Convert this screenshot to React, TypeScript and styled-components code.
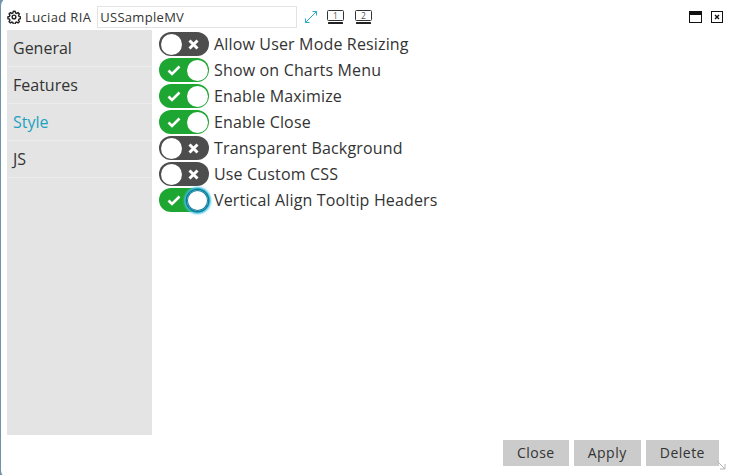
import React from 'react';
import styled, { createGlobalStyle } from 'styled-components';

const GlobalStyle = createGlobalStyle`
    html, body {
        margin: 0;
        padding: 0;
        width: 729px;
        height: 475px;
        overflow: hidden;
        background-color: #6f93a8;
    }
`;

const Dialog = styled.div`
    width: 736px;
    height: 482px;
    margin: -3px 0 0 1px;
    box-sizing: border-box;
    padding: 7px 0 0 6px;
    display: flex;
    flex-direction: column;
    position: relative;
    background-color: white;
    border-radius: 9px;
    font-family: "Open Sans", sans-serif;
    color: #333;
`;

const Content = styled.div`
    width: 722px;
    display: flex;
    flex-direction: column;
`;

const TitleBar = styled.div`
    height: 26px;
    display: flex;
    flex-direction: row;
    align-items: center;
    padding-right: 6px;
`;

const TitleLabel = styled.span`
    font-size: 13px;
    letter-spacing: 0.35px;
    margin: 0 6px 0 4px;
    color: #333;
`;

const NameInput = styled.div`
    width: 200px;
    height: 22px;
    box-sizing: border-box;
    border: 1px solid #e3e3e3;
    padding-left: 2px;
    font-size: 13px;
    letter-spacing: 0.3px;
    line-height: 20px;
    color: #333;
`;

const TitleIcon = styled.svg<{ $left?: number }>`
    flex-shrink: 0;
    margin-left: ${p => p.$left ?? 0}px;
    display: block;
`;

const Spacer = styled.div`
    flex-grow: 1;
`;

const Body = styled.div`
    height: 405px;
    display: flex;
    flex-direction: row;
`;

const Sidebar = styled.div`
    width: 145px;
    height: 100%;
    flex-shrink: 0;
    background-color: #e4e4e4;
`;

const Tab = styled.div<{ $active?: boolean }>`
    height: 37px;
    box-sizing: border-box;
    padding-left: 6px;
    line-height: 36px;
    font-size: 16px;
    border-bottom: 1px solid #ececec;
    color: ${p => (p.$active ? '#1ea1c1' : '#333')};
`;

const Options = styled.div`
    display: flex;
    flex-direction: column;
    padding: 1px 0 0 7px;
`;

const OptionRow = styled.div`
    height: 26px;
    display: flex;
    flex-direction: row;
    align-items: center;
    font-size: 16px;
    letter-spacing: 0.16px;
    color: #333;
`;

const Toggle = styled.div<{ $on: boolean }>`
    width: 50px;
    height: 24px;
    box-sizing: border-box;
    border-radius: 12px;
    margin-right: 5px;
    padding: 0 10px 0 8px;
    display: flex;
    align-items: center;
    justify-content: ${p => (p.$on ? 'flex-start' : 'flex-end')};
    position: relative;
    background-color: ${p => (p.$on ? '#1ea632' : '#4d4d4d')};
`;

const Knob = styled.div<{ $on: boolean; $focused?: boolean }>`
    position: absolute;
    top: 1.5px;
    ${p => (p.$on ? 'right: 1.5px;' : 'left: 1.5px;')}
    width: 21px;
    height: 21px;
    border-radius: 50%;
    background-color: white;
    ${p => p.$focused && 'box-shadow: inset 0 0 0 1px #0d7f9c, 0 0 0 1.5px #0d7f9c, 0 0 2px 3px #45c3e2;'}
`;

const Footer = styled.div`
    display: flex;
    flex-direction: row;
    justify-content: flex-end;
    gap: 5px;
    padding: 5px 10px 0 0;
`;

const FooterButton = styled.div`
    height: 26px;
    padding: 0 14px;
    background-color: #cbcbcb;
    color: #333;
    font-size: 14px;
    line-height: 26px;
    text-align: center;
    letter-spacing: 0.5px;
`;

const ResizeGrip = styled.svg`
    position: absolute;
    left: 715px;
    top: 463px;
`;

const GearIcon = () => (
    <TitleIcon width="14" height="14" viewBox="0 0 24 24" fill="none" stroke="#222" strokeWidth="2.4">
        <circle cx="12" cy="12" r="3.2" />
        <path d="M12 2.2l2 .2.7 2.7 1.9.8 2.4-1.4 2.2 2.3-1.4 2.4.8 1.8 2.6.8v3.2l-2.6.7-.8 1.9 1.4 2.4-2.2 2.2-2.4-1.4-1.9.8-.7 2.6h-3.2l-.7-2.6-1.9-.8-2.4 1.4-2.2-2.2 1.4-2.4-.8-1.9-2.6-.7v-3.2l2.6-.8.8-1.8-1.4-2.4 2.2-2.3 2.4 1.4 1.9-.8.7-2.7z" />
    </TitleIcon>
);

const ExpandIcon = () => (
    <TitleIcon width="14" height="14" viewBox="0 0 14 14" fill="none" stroke="#2aa9cb" strokeWidth="1" $left={7}>
        <path d="M1.5 12.5L12.5 1.5M8.5 1.5h4V5.5M1.5 8.5v4H5.5" />
    </TitleIcon>
);

const ScreenIcon = ({ n, left }: { n: number; left: number }) => (
    <TitleIcon width="18" height="15" viewBox="0 0 18 15" $left={left}>
        <rect x="0.5" y="0.5" width="16" height="10" rx="1" fill="white" stroke="#333" strokeWidth="1" />
        <rect x="1" y="12" width="15" height="2" rx="0.5" fill="#222" />
        <text x="8.5" y="8.8" fontSize="8.5" textAnchor="middle" fill="#555" fontFamily="Open Sans, sans-serif">{n}</text>
    </TitleIcon>
);

const MaximizeIcon = () => (
    <TitleIcon width="13" height="12" viewBox="0 0 13 12">
        <rect x="0.5" y="0.5" width="12" height="11" fill="white" stroke="#111" />
        <rect x="0" y="0" width="13" height="4" fill="#111" />
    </TitleIcon>
);

const CloseIcon = () => (
    <TitleIcon width="12" height="12" viewBox="0 0 12 12" $left={9}>
        <rect x="0.5" y="0.5" width="11" height="11" fill="white" stroke="#111" />
        <path d="M4 4l4 4M8 4l-4 4" stroke="#111" strokeWidth="1.4" />
    </TitleIcon>
);

const CheckMark = () => (
    <svg width="14" height="11" viewBox="0 0 14 11" fill="none" stroke="white" strokeWidth="2.6">
        <path d="M1.5 5.5l3.5 3.5 7.5-7.5" />
    </svg>
);

const CrossMark = () => (
    <svg width="11" height="11" viewBox="0 0 11 11" fill="none" stroke="white" strokeWidth="3">
        <path d="M1.5 1.5l8 8M9.5 1.5l-8 8" />
    </svg>
);

interface OptionProps {
    label: string;
    on: boolean;
    focused?: boolean;
}

const options: OptionProps[] = [
    { label: 'Allow User Mode Resizing', on: false },
    { label: 'Show on Charts Menu', on: true },
    { label: 'Enable Maximize', on: true },
    { label: 'Enable Close', on: true },
    { label: 'Transparent Background', on: false },
    { label: 'Use Custom CSS', on: false },
    { label: 'Vertical Align Tooltip Headers', on: true, focused: true },
];

const tabs = ['General', 'Features', 'Style', 'JS'];

const App: React.FC = () => {
    return (
        <Dialog>
            <GlobalStyle />
            <Content>
                <TitleBar>
                    <GearIcon />
                    <TitleLabel>Luciad RIA</TitleLabel>
                    <NameInput>USSampleMV</NameInput>
                    <ExpandIcon />
                    <ScreenIcon n={1} left={9} />
                    <ScreenIcon n={2} left={10} />
                    <Spacer />
                    <MaximizeIcon />
                    <CloseIcon />
                </TitleBar>
                <Body>
                    <Sidebar>
                        {tabs.map(t => (
                            <Tab key={t} $active={t === 'Style'}>{t}</Tab>
                        ))}
                    </Sidebar>
                    <Options>
                        {options.map(o => (
                            <OptionRow key={o.label}>
                                <Toggle $on={o.on}>
                                    {o.on ? <CheckMark /> : <CrossMark />}
                                    <Knob $on={o.on} $focused={o.focused} />
                                </Toggle>
                                {o.label}
                            </OptionRow>
                        ))}
                    </Options>
                </Body>
                <Footer>
                    <FooterButton>Close</FooterButton>
                    <FooterButton>Apply</FooterButton>
                    <FooterButton>Delete</FooterButton>
                </Footer>
            </Content>
            <ResizeGrip width="11" height="11" viewBox="0 0 11 11" fill="none" stroke="#b5b5b5">
                <path d="M1 1l8 8M9 4v5H4" />
            </ResizeGrip>
        </Dialog>
    );
};

export default App;
